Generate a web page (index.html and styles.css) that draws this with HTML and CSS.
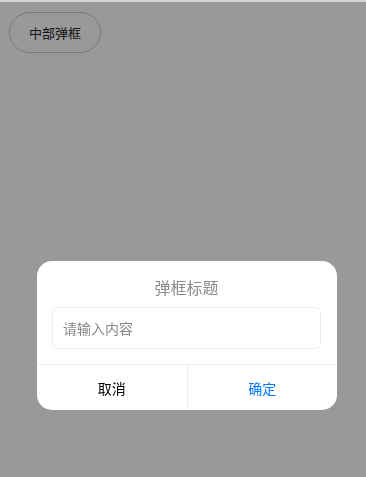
FILE: index.html
```html
<!DOCTYPE html>
<html lang="zh-CN">
<head>
  <meta charset="UTF-8" />
  <meta name="viewport" content="width=device-width, initial-scale=1.0"/>
  <title>中部弹框</title>
  <link rel="stylesheet" href="styles.css">
</head>
<body>
  <div class="page">
    <button class="open-btn" type="button">中部弹框</button>
  </div>

  <!-- mask + center dialog -->
  <div class="mask">
    <div class="dialog">
      <div class="dialog-body">
        <div class="dialog-title">弹框标题</div>
        <input class="dialog-input" type="text" placeholder="请输入内容" />
      </div>
      <div class="dialog-footer">
        <div class="dialog-btn cancel">取消</div>
        <div class="dialog-btn confirm">确定</div>
      </div>
    </div>
  </div>
</body>
</html>
```

FILE: styles.css
```css
html, body {
  margin: 0;
  padding: 0;
  height: 100%;
  background: #ffffff;
  font-family: "Noto Sans CJK SC", "Noto Sans", Arial, sans-serif;
}
.page {
  padding: 12px 9px;
}
.open-btn {
  width: 92px;
  height: 41px;
  border: 1px solid #c8c8c8;
  border-radius: 21px;
  background: #ffffff;
  color: #222222;
  font-size: 13px;
  font-family: inherit;
  padding: 0;
}
.mask {
  position: fixed;
  top: 0;
  left: 0;
  right: 0;
  bottom: 0;
  border-top: 2px solid rgba(255, 255, 255, 0.6);
  background-color: rgba(0, 0, 0, 0.4);
  display: flex;
  flex-direction: column;
  justify-content: flex-end;
  padding: 0 29px 67px 37px;
}
.dialog {
  width: 300px;
  background: #ffffff;
  border-radius: 15px;
  overflow: hidden;
}
.dialog-body {
  padding: 15px 16px 15px 15px;
}
.dialog-title {
  text-align: center;
  font-size: 16px;
  line-height: 22px;
  color: #8a8a8a;
  margin-bottom: 9px;
}
.dialog-input {
  display: block;
  box-sizing: border-box;
  width: 100%;
  height: 42px;
  border: 1px solid #eeeeee;
  border-radius: 5px;
  padding: 0 10px;
  font-size: 14px;
  font-family: inherit;
  outline: none;
}
.dialog-input::placeholder {
  color: #888888;
}
.dialog-footer {
  display: flex;
  border-top: 1px solid #f0f0f0;
  height: 45px;
}
.dialog-btn {
  flex: 1;
  display: flex;
  align-items: center;
  justify-content: center;
  font-size: 14px;
}
.cancel {
  color: #000000;
  border-right: 1px solid #eeeeee;
}
.confirm {
  color: #007aff;
}
```
